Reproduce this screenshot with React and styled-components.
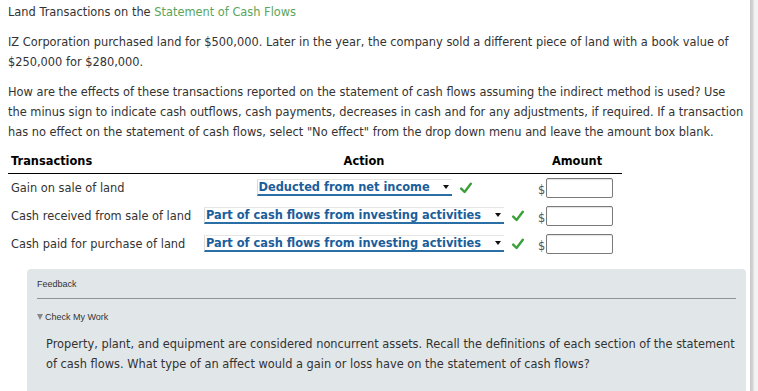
import React from 'react';
import styled, { createGlobalStyle } from 'styled-components';

const GlobalStyle = createGlobalStyle`
  html, body {
    margin: 0;
    padding: 0;
    background: #fff;
  }
  body {
    font-family: "DejaVu Sans", Verdana, sans-serif;
    color: #333;
  }
`;

const Page = styled.div`
  display: flex;
  width: 758px;
  height: 391px;
  overflow: hidden;
`;

const Main = styled.div`
  width: 750px;
  padding: 0 0 0 8px;
  box-sizing: border-box;
`;

const Edge = styled.div`
  width: 8px;
  background: linear-gradient(to right, #c9c9c9 0, #d4d4d4 3px, #f1f1f1 4px, #f4f4f4 100%);
`;

const Title = styled.div`
  font-size: 11.4px;
  line-height: 14px;
  padding-top: 5px;
  color: #333;
`;

const Green = styled.span`
  color: #5aa55a;
`;

const Para = styled.p`
  font-size: 11.4px;
  line-height: 20px;
  margin: ${(p) => p.$top || 0}px 0 0;
  width: 737px;
`;

const Table = styled.div`
  display: grid;
  grid-template-columns: 188px 336px 90px;
  width: 614px;
  margin-top: 11px;
  font-size: 11.4px;
`;

const Head = styled.div`
  font-weight: bold;
  color: #000;
  padding: 0 0 0 ${(p) => p.$pad || 0}px;
  text-align: ${(p) => p.$align || 'left'};
  height: 20px;
  line-height: 16px;
  border-bottom: 1px solid #000;
`;

const Cell = styled.div`
  height: 28px;
  display: flex;
  align-items: center;
  justify-content: ${(p) => p.$justify || 'flex-start'};
  padding-left: ${(p) => p.$pad || 0}px;
  gap: ${(p) => p.$gap || 0}px;
`;

const Select = styled.div`
  position: relative;
  box-sizing: border-box;
  width: ${(p) => p.$w}px;
  height: 17px;
  margin-top: -2px;
  padding: 0 16px 0 1px;
  border-top: 1px solid #e6e6e6;
  border-left: 1px solid #dcdcdc;
  border-bottom: 2px solid #2a6ea6;
  color: #1b5e9b;
  font-weight: bold;
  font-size: 11.4px;
  line-height: 14px;
  white-space: nowrap;
`;

const Arrow = styled.span`
  position: absolute;
  right: 3px;
  top: 5px;
  width: 0;
  height: 0;
  border-left: 3.5px solid transparent;
  border-right: 3.5px solid transparent;
  border-top: 4px solid #111;
`;

const Check = styled.svg`
  width: 12px;
  height: 12px;
  flex: none;
`;

const Dollar = styled.span`
  color: #555;
  font-size: 11.4px;
  margin-top: 4px;
`;

const Input = styled.div`
  width: 67px;
  height: 20px;
  box-sizing: border-box;
  border: 1px solid #7a7a7a;
  border-radius: 2px;
  box-shadow: inset 0 1px 1px rgba(0, 0, 0, 0.12);
  background: #fff;
`;

const Feedback = styled.div`
  margin: 11px 0 0 19px;
  width: 719px;
  height: 140px;
  background: #e1e6e9;
  border-radius: 4px;
  padding: 0 10px;
  box-sizing: border-box;
`;

const FbHead = styled.div`
  font-family: "Liberation Sans", Arial, sans-serif;
  font-size: 9px;
  color: #333;
  padding: 10px 0 0;
  height: 30px;
  box-sizing: border-box;
  border-bottom: 1px solid #8e9396;
`;

const CheckWork = styled.div`
  font-family: "Liberation Sans", Arial, sans-serif;
  font-size: 9px;
  color: #333;
  margin-top: 13px;
  display: flex;
  align-items: center;
  gap: 2px;
`;

const Tri = styled.span`
  width: 0;
  height: 0;
  border-left: 3px solid transparent;
  border-right: 3px solid transparent;
  border-top: 6px solid #888;
`;

const Hint = styled.p`
  margin: 12px 0 0 9px;
  font-size: 11.4px;
  line-height: 20px;
  color: #333;
`;

function Tick() {
  return (
    <Check viewBox="0 0 12 12">
      <path d="M1.2 6.6 L4.6 10 L10.8 1.8" fill="none" stroke="#3aa03a" strokeWidth="2.4" strokeLinecap="round" strokeLinejoin="round" />
    </Check>
  );
}

const rows = [
  { label: 'Gain on sale of land', action: 'Deducted from net income', w: 195 },
  { label: 'Cash received from sale of land', action: 'Part of cash flows from investing activities', w: 300 },
  { label: 'Cash paid for purchase of land', action: 'Part of cash flows from investing activities', w: 300 },
];

export default function App() {
  return (
    <Page>
      <GlobalStyle />
      <Main>
        <Title>
          Land Transactions on the <Green>Statement of Cash Flows</Green>
        </Title>
        <Para $top={13}>
          IZ Corporation purchased land for $500,000. Later in the year, the company sold a different piece of land with a book value of $250,000 for $280,000.
        </Para>
        <Para $top={10}>
          How are the effects of these transactions reported on the statement of cash flows assuming the indirect method is used? Use the minus sign to indicate cash outflows, cash payments, decreases in cash and for any adjustments, if required. If a transaction has no effect on the statement of cash flows, select "No effect" from the drop down menu and leave the amount box blank.
        </Para>
        <Table>
          <Head $pad={3}>Transactions</Head>
          <Head $align="center">Action</Head>
          <Head $align="center">Amount</Head>
          {rows.map((r) => (
            <React.Fragment key={r.label}>
              <Cell $pad={3}>{r.label}</Cell>
              <Cell $justify="center" $gap={8}>
                <Select $w={r.w}>
                  {r.action}
                  <Arrow />
                </Select>
                <Tick />
              </Cell>
              <Cell $pad={6} $gap={1}>
                <Dollar>$</Dollar>
                <Input />
              </Cell>
            </React.Fragment>
          ))}
        </Table>
        <Feedback>
          <FbHead>Feedback</FbHead>
          <CheckWork>
            <Tri />
            Check My Work
          </CheckWork>
          <Hint>
            Property, plant, and equipment are considered noncurrent assets. Recall the definitions of each section of the statement of cash flows. What type of an affect would a gain or loss have on the statement of cash flows?
          </Hint>
        </Feedback>
      </Main>
      <Edge />
    </Page>
  );
}
